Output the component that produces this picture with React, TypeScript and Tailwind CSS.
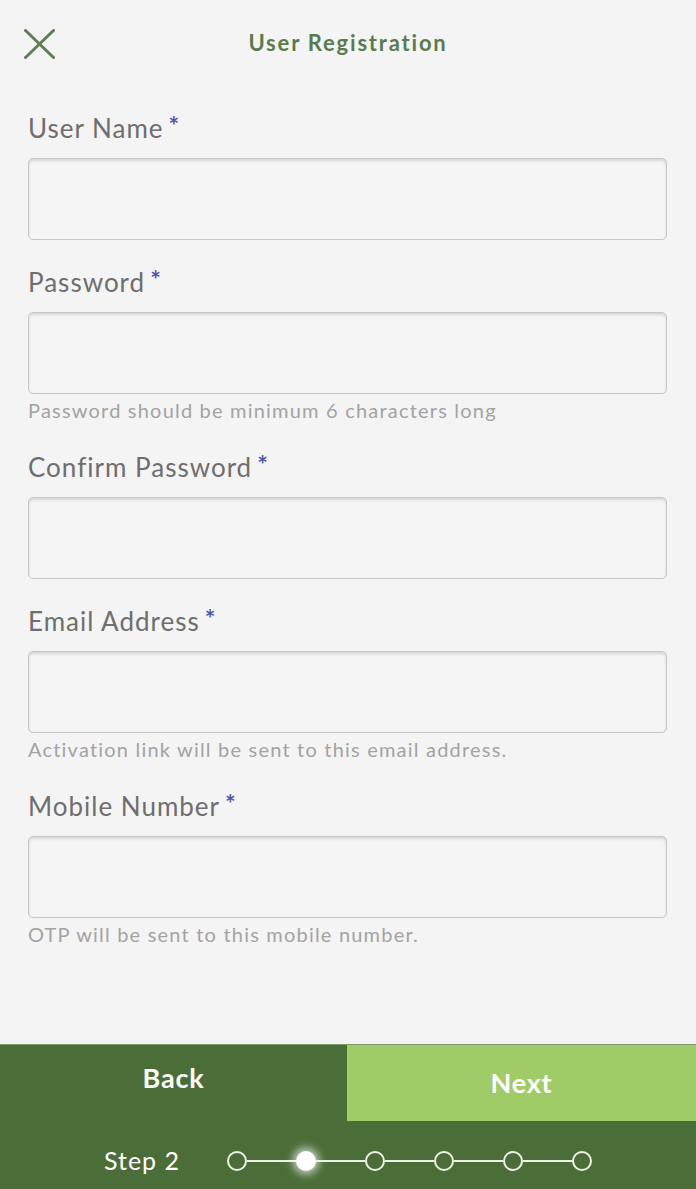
import React from 'react';

type Field = { label: string; hint?: string };

const fields: Field[] = [
  { label: 'User Name' },
  { label: 'Password', hint: 'Password should be minimum 6 characters long' },
  { label: 'Confirm Password' },
  { label: 'Email Address', hint: 'Activation link will be sent to this email address.' },
  { label: 'Mobile Number', hint: 'OTP will be sent to this mobile number.' },
];

function Stepper({ total, active }: { total: number; active: number }) {
  return (
    <div className="flex items-center">
      {Array.from({ length: total }).map((_, i) => (
        <div key={i} className="flex items-center">
          {i > 0 && <div className="w-[49px] h-[2px] bg-[#eef1e6]" />}
          {i === active ? (
            <div className="w-[20px] h-[20px] rounded-full bg-white shadow-[0_0_8px_3px_rgba(255,255,255,0.7)]" />
          ) : (
            <div className="w-[20px] h-[20px] rounded-full border-2 border-[#eef1e6]" />
          )}
        </div>
      ))}
    </div>
  );
}

export default function App() {
  return (
    <div
      className="min-h-[1189px] w-full flex flex-col bg-[#f4f4f4]"
      style={{ fontFamily: 'Lato, "Open Sans", sans-serif' }}
    >
      {/* Header */}
      <div className="relative h-[86px] flex items-center justify-center">
        <button className="absolute left-[24px] top-[29px]" aria-label="Close">
          <svg width="31" height="30" viewBox="0 0 31 30" fill="none">
            <path d="M1.5 1.5 L29.5 28.5 M29.5 1.5 L1.5 28.5" stroke="#5e7f52" strokeWidth="3" strokeLinecap="round" />
          </svg>
        </button>
        <h1 className="text-[22px] font-bold tracking-[1.8px] text-[#5a7c4c] -mt-[1px]">User Registration</h1>
      </div>

      {/* Form */}
      <div className="flex-1 px-[28px] pt-[26px] pr-[29px]">
        {fields.map((f, i) => (
          <div key={f.label} className={i === 0 ? '' : f.label === 'Password' || f.label === 'Email Address' ? 'mt-[26px]' : 'mt-[29px]'}>
            <label className="flex items-start h-[32px] leading-[32px] text-[26px] tracking-[1px] text-[#6e6e6e]">
              {f.label}
              <span className="text-[#5054b0] ml-[5px] text-[25px] font-bold leading-[26px]">*</span>
            </label>
            <div className="mt-[14px] h-[82px] rounded-[5px] border border-[#c6c6c6] bg-[#f5f5f5] shadow-[inset_0_2px_3px_rgba(0,0,0,0.13)]" />
            {f.hint && (
              <p className="h-[24px] leading-[24px] mt-[4px] text-[20px] tracking-[1.2px] text-[#a3a3a3]">{f.hint}</p>
            )}
          </div>
        ))}
      </div>

      {/* Footer */}
      <div className="bg-[#4b6e39]">
        <div className="flex h-[77px] border-t border-[#7d9a6a]">
          <button className="flex-1 text-white text-[27px] tracking-[0.8px] font-bold pb-[10px]">Back</button>
          <button className="w-[349px] bg-[#a0cc67] text-white text-[27px] tracking-[0.8px] font-bold">Next</button>
        </div>
        <div className="h-[68px] flex items-center pl-[104px] gap-[47px] pt-[12px]">
          <span className="text-white text-[25px] tracking-[1px]">Step 2</span>
          <Stepper total={6} active={1} />
        </div>
      </div>
    </div>
  );
}
